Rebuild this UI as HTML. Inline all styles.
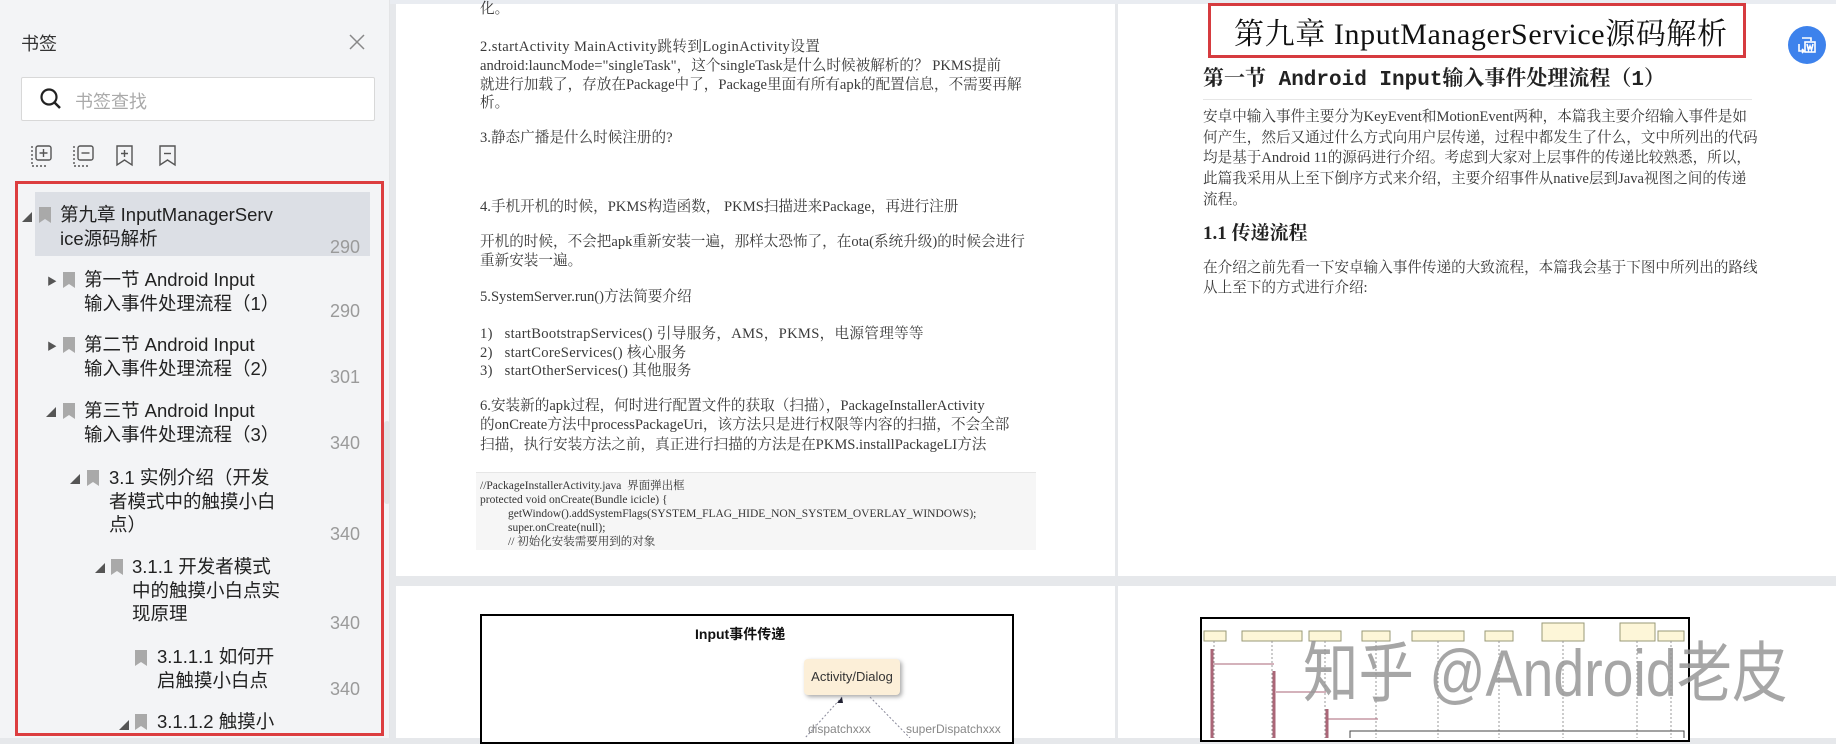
<!DOCTYPE html>
<html><head><meta charset="utf-8">
<style>
*{margin:0;padding:0;box-sizing:border-box}
body{width:1836px;height:738px;overflow:hidden;background:#e6e8eb;position:relative;font-family:"Liberation Sans","Noto Sans CJK SC",sans-serif}
.a{position:absolute;white-space:nowrap}
#side{position:absolute;left:0;top:0;width:390px;height:738px;background:#f3f4f6;border-right:1px solid #e3e4e6}
.it{position:absolute;font-size:18.5px;line-height:23.5px;color:#222}
.pg{position:absolute;font-size:18px;color:#9a9a9a;right:1476px;width:50px;text-align:right;line-height:20px}
.bm{position:absolute;width:12px;height:16px}
.ar{position:absolute;font-size:10px;color:#555}
.page{position:absolute;background:#fff}
.t{position:absolute;white-space:nowrap;font-family:"Liberation Serif","Noto Serif CJK SC",serif;font-size:14.6px;color:#3a3a3a;line-height:20px}
.c{position:absolute;white-space:nowrap;font-family:"Liberation Serif","Noto Serif CJK SC",serif;font-size:11.5px;color:#333;line-height:14px}
</style></head><body>
<div class="a" style="left:0;top:0;width:1836px;height:4px;background:#e9ecf1"></div>
<div id="side">
<div class="a" style="left:21px;top:30px;font-size:18px;color:#333">书签</div>
<svg class="a" style="left:348px;top:33px" width="18" height="18" viewBox="0 0 18 18"><path d="M2 2L16 16M16 2L2 16" stroke="#888" stroke-width="1.5"/></svg>
<div class="a" style="left:21px;top:77px;width:354px;height:44px;background:#fff;border:1px solid #d8d8d8;border-radius:2px"></div>
<svg class="a" style="left:39px;top:87px" width="24" height="24" viewBox="0 0 24 24"><circle cx="10" cy="10" r="7.5" fill="none" stroke="#222" stroke-width="2.2"/><path d="M15.5 15.5L21 21" stroke="#222" stroke-width="2.5"/></svg>
<div class="a" style="left:75px;top:88px;font-size:18px;color:#aaa">书签查找</div>
<svg class="a" style="left:29px;top:143px" width="160" height="26" viewBox="0 0 160 26" fill="none" stroke="#555" stroke-width="1.4">
<rect x="7" y="3" width="15" height="14" rx="2"/><path d="M14.5 6v8M10.5 10h8"/><path d="M3 3v20h16" stroke-dasharray="2 2"/>
<rect x="49" y="3" width="15" height="14" rx="2"/><path d="M52.5 10h8"/><path d="M45 3v20h16" stroke-dasharray="2 2"/>
<path d="M88 3h15v19l-7.5-5l-7.5 5z"/><path d="M95.5 7v7M92 10.5h7"/>
<path d="M131 3h15v19l-7.5-5l-7.5 5z"/><path d="M135 10.5h7"/>
</svg>
<div class="a" style="left:15px;top:181px;width:369px;height:555px;border:3px solid #dc3d3f"></div>
<div class="a" style="left:35px;top:192px;width:335px;height:64px;background:#dcdfe5"></div>
<div class="a" style="left:384px;top:421px;width:6px;height:83px;background:#e2e3e5;border-radius:3px"></div>
</div>
<div class="ar" style="left:22px;top:209px">◢</div>
<svg class="bm" style="left:39px;top:207px" viewBox="0 0 12 16"><path d="M0 0h12v16l-6-4l-6 4z" fill="#a9a9a9"/></svg>
<div class="it" style="left:60px;top:203px">第九章 InputManagerServ<br>ice源码解析</div>
<div class="pg" style="top:237px">290</div>

<div class="ar" style="left:47px;top:273px">▶</div>
<svg class="bm" style="left:63px;top:272px" viewBox="0 0 12 16"><path d="M0 0h12v16l-6-4l-6 4z" fill="#a9a9a9"/></svg>
<div class="it" style="left:84px;top:268px">第一节 Android Input<br>输入事件处理流程（1）</div>
<div class="pg" style="top:301px">290</div>

<div class="ar" style="left:47px;top:338px">▶</div>
<svg class="bm" style="left:63px;top:337px" viewBox="0 0 12 16"><path d="M0 0h12v16l-6-4l-6 4z" fill="#a9a9a9"/></svg>
<div class="it" style="left:84px;top:333px">第二节 Android Input<br>输入事件处理流程（2）</div>
<div class="pg" style="top:367px">301</div>

<div class="ar" style="left:46px;top:404px">◢</div>
<svg class="bm" style="left:63px;top:403px" viewBox="0 0 12 16"><path d="M0 0h12v16l-6-4l-6 4z" fill="#a9a9a9"/></svg>
<div class="it" style="left:84px;top:399px">第三节 Android Input<br>输入事件处理流程（3）</div>
<div class="pg" style="top:433px">340</div>

<div class="ar" style="left:70px;top:471px">◢</div>
<svg class="bm" style="left:87px;top:470px" viewBox="0 0 12 16"><path d="M0 0h12v16l-6-4l-6 4z" fill="#a9a9a9"/></svg>
<div class="it" style="left:109px;top:466px">3.1 实例介绍（开发<br>者模式中的触摸小白<br>点）</div>
<div class="pg" style="top:524px">340</div>

<div class="ar" style="left:95px;top:560px">◢</div>
<svg class="bm" style="left:111px;top:559px" viewBox="0 0 12 16"><path d="M0 0h12v16l-6-4l-6 4z" fill="#a9a9a9"/></svg>
<div class="it" style="left:132px;top:555px">3.1.1 开发者模式<br>中的触摸小白点实<br>现原理</div>
<div class="pg" style="top:613px">340</div>

<svg class="bm" style="left:135px;top:650px" viewBox="0 0 12 16"><path d="M0 0h12v16l-6-4l-6 4z" fill="#a9a9a9"/></svg>
<div class="it" style="left:157px;top:645px">3.1.1.1 如何开<br>启触摸小白点</div>
<div class="pg" style="top:679px">340</div>

<div class="ar" style="left:119px;top:717px">◢</div>
<svg class="bm" style="left:135px;top:714px" viewBox="0 0 12 16"><path d="M0 0h12v16l-6-4l-6 4z" fill="#a9a9a9"/></svg>
<div class="it" style="left:157px;top:710px">3.1.1.2 触摸小</div>

<div class="page" style="left:396px;top:4px;width:719px;height:572px"></div>
<div class="page" style="left:396px;top:586px;width:719px;height:152px"></div>
<div class="page" style="left:1118px;top:4px;width:718px;height:572px"></div>
<div class="page" style="left:1118px;top:586px;width:718px;height:152px"></div>

<div class="t" style="left:480px;top:-1px">化。</div>
<div class="t" style="left:480px;top:37px;letter-spacing:0.4px">2.startActivity MainActivity跳转到LoginActivity设置</div>
<div class="t" style="left:480px;top:56px">android:launcMode="singleTask"，这个singleTask是什么时候被解析的？ PKMS提前</div>
<div class="t" style="left:480px;top:75px">就进行加载了，存放在Package中了，Package里面有所有apk的配置信息，不需要再解</div>
<div class="t" style="left:480px;top:93px">析。</div>
<div class="t" style="left:480px;top:128px">3.静态广播是什么时候注册的?</div>
<div class="t" style="left:480px;top:197px">4.手机开机的时候，PKMS构造函数， PKMS扫描进来Package，再进行注册</div>
<div class="t" style="left:480px;top:232px">开机的时候，不会把apk重新安装一遍，那样太恐怖了，在ota(系统升级)的时候会进行</div>
<div class="t" style="left:480px;top:251px">重新安装一遍。</div>
<div class="t" style="left:480px;top:287px">5.SystemServer.run()方法简要介绍</div>
<div class="t" style="left:480px;top:324px;letter-spacing:0.3px">1)&nbsp;&nbsp; startBootstrapServices() 引导服务，AMS，PKMS，电源管理等等</div>
<div class="t" style="left:480px;top:343px;letter-spacing:0.3px">2)&nbsp;&nbsp; startCoreServices() 核心服务</div>
<div class="t" style="left:480px;top:361px;letter-spacing:0.3px">3)&nbsp;&nbsp; startOtherServices() 其他服务</div>
<div class="t" style="left:480px;top:396px">6.安装新的apk过程，何时进行配置文件的获取（扫描），PackageInstallerActivity</div>
<div class="t" style="left:480px;top:415px">的onCreate方法中processPackageUri，该方法只是进行权限等内容的扫描，不会全部</div>
<div class="t" style="left:480px;top:435px">扫描，执行安装方法之前，真正进行扫描的方法是在PKMS.installPackageLI方法</div>

<div class="a" style="left:476px;top:472px;width:560px;height:78px;background:#f6f6f6;border-top:1px solid #e6e6e6"></div>
<div class="c" style="left:480px;top:479px">//PackageInstallerActivity.java&nbsp; 界面弹出框</div>
<div class="c" style="left:480px;top:493px">protected void onCreate(Bundle icicle) {</div>
<div class="c" style="left:508px;top:507px">getWindow().addSystemFlags(SYSTEM_FLAG_HIDE_NON_SYSTEM_OVERLAY_WINDOWS);</div>
<div class="c" style="left:508px;top:521px">super.onCreate(null);</div>
<div class="c" style="left:508px;top:535px">// 初始化安装需要用到的对象</div>

<div class="a" style="left:480px;top:614px;width:534px;height:130px;border:2px solid #000;background:#fff"></div>
<div class="a" style="left:695px;top:624px;font-size:14px;font-weight:bold;color:#111">Input事件传递</div>
<div class="a" style="left:804px;top:659px;width:96px;height:36px;background:#fcefd8;border-radius:4px;box-shadow:2px 2px 4px #aaa;font-size:13px;line-height:36px;text-align:center;color:#333">Activity/Dialog</div>
<svg class="a" style="left:770px;top:695px" width="180" height="43"><path d="M72 2L35 43M100 2L140 43" stroke="#889" stroke-dasharray="2 2"/><path d="M72 2l-5 6h6z" fill="#223"/></svg>
<div class="a" style="left:808px;top:722px;font-size:12px;color:#888">dispatchxxx</div>
<div class="a" style="left:906px;top:722px;font-size:12px;color:#888">superDispatchxxx</div>

<div class="a" style="left:1208px;top:3px;width:538px;height:55px;border:3px solid #d63b3f"></div>
<div class="a" style="left:1234px;top:9px;font-family:'Liberation Serif','Noto Serif CJK SC',serif;font-size:30px;color:#111;letter-spacing:0.6px">第九章 InputManagerService源码解析</div>
<div class="a" style="left:1203px;top:62px;font-family:'Liberation Mono','Noto Serif CJK SC',serif;font-size:21px;font-weight:bold;color:#222">第一节 Android Input输入事件处理流程（1）</div>
<div class="a" style="left:1203px;top:99px;width:549px;height:1px;background:#e6e6e6"></div>
<div class="t" style="left:1203px;top:107px">安卓中输入事件主要分为KeyEvent和MotionEvent两种，本篇我主要介绍输入事件是如</div>
<div class="t" style="left:1203px;top:128px">何产生，然后又通过什么方式向用户层传递，过程中都发生了什么，文中所列出的代码</div>
<div class="t" style="left:1203px;top:148px">均是基于Android 11的源码进行介绍。考虑到大家对上层事件的传递比较熟悉，所以，</div>
<div class="t" style="left:1203px;top:169px">此篇我采用从上至下倒序方式来介绍，主要介绍事件从native层到Java视图之间的传递</div>
<div class="t" style="left:1203px;top:190px">流程。</div>
<div class="a" style="left:1203px;top:218px;font-family:'Liberation Serif','Noto Serif CJK SC',serif;font-size:19px;font-weight:bold;color:#222">1.1 传递流程</div>
<div class="t" style="left:1203px;top:258px">在介绍之前先看一下安卓输入事件传递的大致流程，本篇我会基于下图中所列出的路线</div>
<div class="t" style="left:1203px;top:278px">从上至下的方式进行介绍:</div>

<div class="a" style="left:1788px;top:26px;width:38px;height:38px;border-radius:50%;background:#3d82ec"></div>
<svg class="a" style="left:1796px;top:34px" width="22" height="22" viewBox="0 0 22 22" fill="none" stroke="#fff" stroke-width="1.6"><path d="M6 4h9v3"/><rect x="9" y="8" width="10" height="10"/><path d="M11 10l1.5 6l1.5-4l1.5 4l1.5-6"/><path d="M3 10v7h5M6 15l2 2l-2 2"/></svg>

<div class="a" style="left:1200px;top:617px;width:490px;height:125px;border:2px solid #000;background:#fff"></div>
<svg class="a" style="left:1202px;top:619px" width="486" height="119" fill="none" stroke="#b99" stroke-width="1">
<g fill="#fdf6d8" stroke="#997">
<rect x="2" y="12" width="22" height="10"/><rect x="40" y="12" width="60" height="10"/><rect x="107" y="12" width="32" height="10"/><rect x="160" y="12" width="28" height="10"/><rect x="210" y="12" width="52" height="10"/><rect x="283" y="12" width="28" height="10"/><rect x="340" y="4" width="42" height="18"/><rect x="418" y="4" width="35" height="18"/><rect x="456" y="12" width="26" height="10"/></g>
<g stroke-dasharray="2 2" stroke="#999"><path d="M12 22v100M70 22v100M123 22v100M174 22v100M236 22v100M297 22v100M361 22v100M435 22v100M469 22v100"/></g>
<path d="M10 30v92M72 52v70M125 90v32M176 120v2" stroke="#a67" stroke-width="3"/>
<path d="M12 45h60M74 73h50M126 100h50" stroke="#a67"/>
<rect x="148" y="112" width="334" height="20" stroke="#444"/>
</svg>
<div class="a" style="left:1303px;top:640px;font-size:66px;line-height:1;color:rgba(150,150,150,0.85);font-family:'Liberation Sans','Noto Sans CJK SC',sans-serif;transform:scaleX(0.84);transform-origin:0 0">知乎 @Android老皮</div>
</body></html>
